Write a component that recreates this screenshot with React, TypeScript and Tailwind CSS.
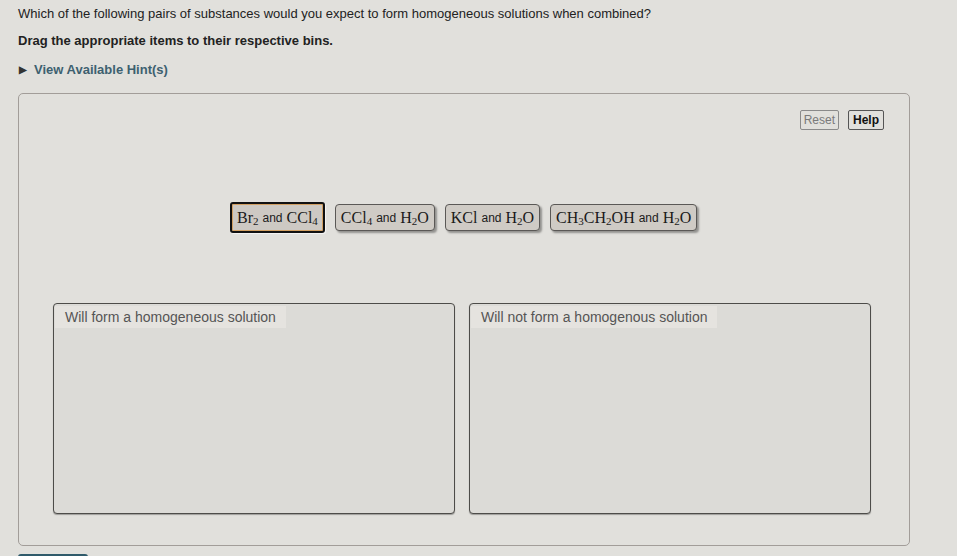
import type { ReactNode } from 'react'

const serif = "font-['Liberation_Serif','Times_New_Roman',serif]"

function Sub({ children }: { children: ReactNode }) {
  return <span className="text-[11px] relative top-[4px]">{children}</span>
}

function And() {
  return <span className="font-['Liberation_Sans',Arial,sans-serif] text-[12px] mx-[4px]">and</span>
}

const chips: { key: string; content: ReactNode }[] = [
  { key: 'br2', content: <>Br<Sub>2</Sub><And />CCl<Sub>4</Sub></> },
  { key: 'ccl4', content: <>CCl<Sub>4</Sub><And />H<Sub>2</Sub>O</> },
  { key: 'kcl', content: <>KCl<And />H<Sub>2</Sub>O</> },
  { key: 'etoh', content: <>CH<Sub>3</Sub>CH<Sub>2</Sub>OH<And />H<Sub>2</Sub>O</> },
]

function Bin({ label }: { label: string }) {
  return (
    <div className="h-[211px] rounded-[4px] border-[1.5px] border-[#4d4c49] bg-[#dcdbd7] p-[1px] shadow-[0_1px_1px_rgba(0,0,0,0.3)]">
      <span className="inline-block bg-[#e5e3df] pl-[10px] pr-[10px] py-[2px] text-[14px] leading-[18px] text-[#555]">
        {label}
      </span>
    </div>
  )
}

export default function App() {
  return (
    <div className="min-h-[556px] bg-[#e1e0dc] font-['Liberation_Sans',Arial,sans-serif] text-[#222] overflow-hidden">
      <div className="pl-[18px] pt-[6px] w-[910px]">
        <p className="text-[13px] leading-[16px]">
          Which of the following pairs of substances would you expect to form homogeneous solutions when combined?
        </p>
        <p className="mt-[11px] text-[13px] leading-[16px] font-bold">
          Drag the appropriate items to their respective bins.
        </p>
        <p className="mt-[13px] flex items-center text-[13px] leading-[16px] font-bold text-[#3d6070]">
          <span className="text-[10px] mr-[7px] ml-[1px] text-[#333]">▶</span>
          View Available Hint(s)
        </p>

        <div className="mt-[15px] h-[453px] rounded-[5px] border border-[#a29d99] px-[34px] pt-[16px]">
          <div className="flex justify-end gap-[9px] mr-[-9px]">
            <button className="h-[20px] rounded-[2px] border border-[#8a8a8a] px-[3px] text-[12px] text-[#7a7a7a]">Reset</button>
            <button className="h-[20px] rounded-[2px] border border-[#555] px-[4px] text-[12px] font-bold text-[#111]">Help</button>
          </div>

          <div className="mt-[72px] flex gap-[10px] pl-[177px]">
            {chips.map((c, i) => (
              <div
                key={c.key}
                className={
                  i === 0
                    ? 'h-[31px] rounded-[3px] border-2 border-[#111] bg-[#cdc9c3] ring-1 ring-inset ring-[#d2a063] px-[5px] flex items-center text-[16px] leading-none text-[#1a1a1a] shadow-[1px_1px_1px_#f5f5f5] ' + serif
                    : 'h-[27px] mt-[2px] rounded-[4px] border-[1.5px] border-[#5a5856] bg-[#cfcbc5] px-[5px] flex items-center text-[16px] leading-none text-[#1a1a1a] shadow-[2px_2px_2px_rgba(0,0,0,0.35)] ' + serif
                }
              >
                {c.content}
              </div>
            ))}
          </div>

          <div className="mt-[70px] grid grid-cols-2 gap-[14px] w-[818px]">
            <Bin label="Will form a homogeneous solution" />
            <Bin label="Will not form a homogenous solution" />
          </div>
        </div>

        <div className="mt-[8px] h-[10px] w-[70px] rounded-t-[3px] bg-[#2f5a6a]" />
      </div>
    </div>
  )
}
